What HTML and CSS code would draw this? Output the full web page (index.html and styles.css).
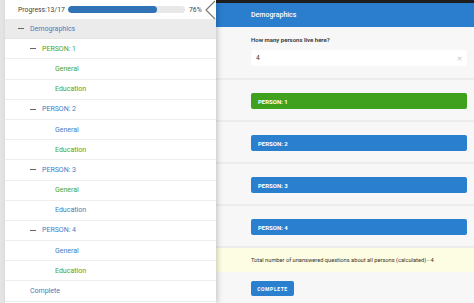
FILE: index.html
```html
<!DOCTYPE html>
<html lang="en">
<head>
  <meta charset="UTF-8" />
  <title>Survey - Demographics</title>
  <link rel="stylesheet" href="styles.css">
</head>
<body>
  <div class="page">
    <div class="edge"></div>

    <aside class="sidebar">
      <div class="progress-row">
        <span class="progress-label">Progress:13/17</span>
        <div class="progress-track"><div class="progress-fill" style="width: 76%"></div></div>
        <span class="progress-pct">76%</span>
        <svg class="collapse" width="11" height="20" viewBox="0 0 11 20">
          <polyline points="10,1 1,10 10,19" fill="none" stroke="#7a7a7a" stroke-width="1.2" />
        </svg>
      </div>

      <ul class="tree">
        <li class="node page-node active"><span class="dash"></span><span class="blue">Demographics</span></li>
        <li class="node panel-node"><span class="dash"></span><span class="green">PERSON: 1</span></li>
        <li class="node leaf green">General</li>
        <li class="node leaf green">Education</li>
        <li class="node panel-node"><span class="dash"></span><span class="blue">PERSON: 2</span></li>
        <li class="node leaf blue">General</li>
        <li class="node leaf green">Education</li>
        <li class="node panel-node"><span class="dash"></span><span class="blue">PERSON: 3</span></li>
        <li class="node leaf green">General</li>
        <li class="node leaf blue">Education</li>
        <li class="node panel-node"><span class="dash"></span><span class="blue">PERSON: 4</span></li>
        <li class="node leaf blue">General</li>
        <li class="node leaf green">Education</li>
        <li class="node page-node blue">Complete</li>
      </ul>
    </aside>

    <main class="main">
      <header class="page-title">Demographics</header>

      <section class="question">
        <div class="question-title">How many persons live here?</div>
        <div class="input-box">
          <span>4</span>
          <span class="clear">&times;</span>
        </div>
      </section>

      <section class="question panel">
        <div class="panel-bar done">PERSON: 1</div>
      </section>
      <section class="question panel">
        <div class="panel-bar">PERSON: 2</div>
      </section>
      <section class="question panel">
        <div class="panel-bar">PERSON: 3</div>
      </section>
      <section class="question panel">
        <div class="panel-bar">PERSON: 4</div>
      </section>

      <section class="calculated">
        Total number of unanswered questions about all persons (calculated) - 4
      </section>

      <div class="actions">
        <button class="complete-btn">COMPLETE</button>
      </div>
    </main>
  </div>
</body>
</html>
```

FILE: styles.css
```css
* {
  box-sizing: border-box;
}
body {
  margin: 0;
  font-family: Roboto, "Liberation Sans", Arial, sans-serif;
  background: #f6f6f6;
  overflow: hidden;
}
.page {
  display: flex;
  height: 303px;
}
.edge {
  width: 5px;
  flex: none;
  background: #e4e4e4;
}

/* Sidebar */
.sidebar {
  width: 211px;
  flex: none;
  background: #fff;
  box-shadow: 2px 0 5px rgba(0,0,0,0.18);
  position: relative;
  z-index: 2;
}
.progress-row {
  height: 19px;
  display: flex;
  align-items: center;
  padding-left: 13px;
  color: #444;
}
.progress-row > * {
  flex: none;
}
.progress-label {
  width: 50px;
  font-size: 6.8px;
  white-space: nowrap;
}
.progress-track {
  width: 117px;
  height: 7px;
  background: #e8e8e8;
  border-radius: 4px;
  overflow: hidden;
}
.progress-fill {
  height: 100%;
  background: #2f73b6;
  border-radius: 4px;
}
.progress-pct {
  margin-left: 4px;
  width: 16px;
  font-size: 6.8px;
}
.collapse {
  display: block;
  margin-top: 1px;
}
.tree {
  list-style: none;
  margin: 0;
  padding: 0;
}
.node {
  height: 20.2px;
  display: flex;
  align-items: center;
  border-bottom: 1px solid #eeeeee;
  font-size: 7px;
}
.node.active {
  background: #ebebeb;
  border-bottom-color: #e4e4e4;
}
.page-node {
  padding-left: 13px;
}
.panel-node {
  padding-left: 25px;
}
.leaf {
  padding-left: 50px;
}
.page-node.blue {
  padding-left: 25px;
}
.dash {
  width: 6px;
  height: 1px;
  background: #666;
  margin-right: 6px;
}
.blue {
  color: #3f7dc4;
}
.green {
  color: #4aa52d;
}

/* Main */
.main {
  flex: 1;
  border-top: 3px solid #1e1e1e;
  background: #f7f7f7;
}
.page-title {
  height: 24px;
  background: #2a7ecd;
  color: #fff;
  font-size: 7px;
  font-weight: 500;
  display: flex;
  align-items: center;
  padding-left: 35px;
}
.question {
  padding: 9px 7px 12px 35px;
  border-bottom: 2px solid #ececec;
}
.question-title {
  font-size: 6px;
  font-weight: 600;
  color: #333;
  margin-bottom: 7px;
}
.input-box {
  height: 16px;
  background: #fff;
  border-radius: 2px;
  display: flex;
  align-items: center;
  justify-content: space-between;
  padding: 0 5px;
  font-size: 6.5px;
  color: #333;
}
.clear {
  color: #b8b8b8;
  font-size: 9px;
  font-weight: 300;
}
.panel {
  padding-top: 13px;
  padding-bottom: 11px;
  height: 42px;
}
.panel-bar {
  height: 16px;
  background: #2b7fcf;
  border-radius: 2px;
  color: #fff;
  font-size: 6px;
  font-weight: 700;
  display: flex;
  align-items: center;
  padding-left: 7px;
}
.panel-bar.done {
  background: #3fa11d;
}
.calculated {
  height: 24px;
  background: #fdfde3;
  display: flex;
  align-items: center;
  padding-left: 35px;
  font-size: 5.7px;
  color: #333;
}
.actions {
  display: flex;
  padding: 9px 35px;
}
.complete-btn {
  width: 43px;
  height: 15px;
  padding: 0;
  border: none;
  border-radius: 2px;
  background: #2b7fcf;
  color: #fff;
  font-family: inherit;
  font-size: 5px;
  font-weight: 700;
  letter-spacing: 0.6px;
}
```
